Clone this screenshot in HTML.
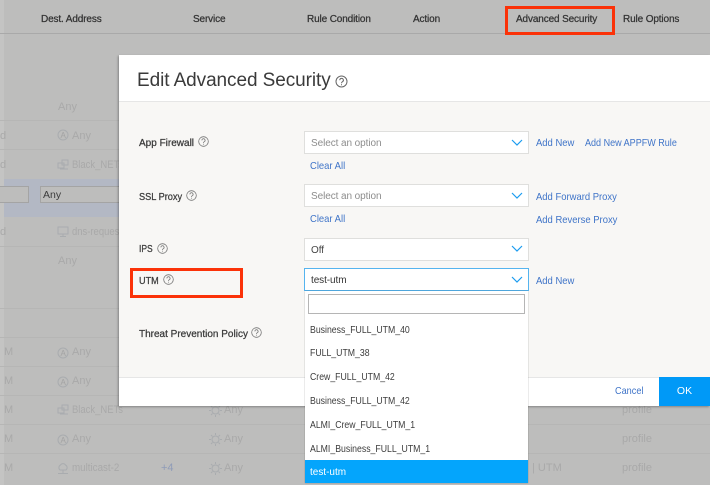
<!DOCTYPE html>
<html>
<head>
<meta charset="utf-8">
<style>
html,body{margin:0;padding:0;width:710px;height:485px;overflow:hidden;background:#bdbdbc;}
#w{position:absolute;left:0;top:0;width:710px;height:485px;overflow:hidden;font-family:"Liberation Sans",sans-serif;filter:blur(.3px);}
.t{position:absolute;white-space:nowrap;font-size:10px;line-height:14px;transform-origin:left center;}
.h{color:#333;-webkit-text-stroke:.25px #333;top:12.500px;letter-spacing:-.13px;}
.g{color:#a9a9a9;font-size:11px;}
.n{transform:scaleX(.86);}
.gl{position:absolute;left:0;width:710px;height:1px;background:#b6b6b5;}
.b{position:absolute;box-sizing:border-box;}
.l{color:#3a3a3a;-webkit-text-stroke:.25px #3a3a3a;left:139px;}
.a{color:#3f74c8;font-size:10.500px;transform:scaleX(.9);}
.s{position:absolute;left:304px;width:225px;height:23px;box-sizing:border-box;background:#fff;border:1px solid #dfdfdd;font-size:10px;line-height:23px;padding-left:6px;color:#8d8d8d;letter-spacing:-.08px;}
.o{color:#3c3c3c;font-size:10.500px;left:310px;transform:scaleX(.83);}
svg{position:absolute;overflow:visible;}
</style>
</head>
<body>
<div id="w">
<div class="b" style="left:0;top:0;width:4px;height:485px;background:#c4c4c3"></div>

<div class="t h" style="left:41px">Dest. Address</div>
<div class="t h" style="left:193px">Service</div>
<div class="t h" style="left:307px">Rule Condition</div>
<div class="t h" style="left:413px">Action</div>
<div class="t h" style="left:516px">Advanced Security</div>
<div class="t h" style="left:623px">Rule Options</div>
<div class="gl" style="top:33px;background:#a9a9a9"></div>

<div class="gl" style="top:120px"></div>
<div class="gl" style="top:149px"></div>
<div class="b" style="left:4px;top:179px;width:115px;height:38px;background:#b3b8c4"></div>
<div class="b" style="left:0;top:186px;width:29px;height:17px;background:#bdbdbc;border:1px solid #a4a4a4;border-left:0"></div>
<div class="b" style="left:40px;top:186px;width:79px;height:17px;background:#bdbdbc;border:1px solid #a4a4a4;border-right:0"></div>
<div class="t" style="left:43px;top:188px;font-size:10.500px;color:#3c3c3c">Any</div>
<div class="gl" style="top:246px;width:119px"></div>
<div class="gl" style="top:308px;width:119px"></div>
<div class="gl" style="top:337px;width:119px"></div>
<div class="gl" style="top:366px;width:119px"></div>
<div class="gl" style="top:395px;width:119px"></div>
<div class="gl" style="top:424px"></div>
<div class="gl" style="top:453px"></div>

<div class="t g" style="left:58px;top:100px">Any</div>
<div class="t g" style="left:0;top:129px">d</div>
<svg style="left:57px;top:129px" width="12" height="12"><circle cx="6" cy="6" r="5" fill="none" stroke="#a9acaf"/><text x="3.500" y="9" font-size="8" fill="#a3a3a3" font-family="Liberation Sans">A</text></svg>
<div class="t g" style="left:72px;top:129px">Any</div>
<div class="t g" style="left:0;top:158px">d</div>
<svg style="left:57px;top:159px" width="12" height="11" fill="none" stroke="#a9acaf"><rect x="5" y="1" width="6" height="5"/><rect x="1" y="4" width="6" height="5"/><path d="M3 10h8"/></svg>
<div class="t g n" style="left:72px;top:158px">Black_NETs</div>
<div class="t g" style="left:0;top:225px">d</div>
<svg style="left:57px;top:226px" width="12" height="11" fill="none" stroke="#a9acaf"><rect x="1" y="1" width="10" height="7"/><path d="M6 8v2M3 10.500h6"/></svg>
<div class="t g n" style="left:72px;top:225px">dns-request</div>
<div class="t g" style="left:58px;top:254px">Any</div>

<div class="t g" style="left:4px;top:345px">M</div>
<svg style="left:57px;top:347px" width="12" height="12"><circle cx="6" cy="6" r="5" fill="none" stroke="#a9acaf"/><text x="3.500" y="9" font-size="8" fill="#a3a3a3" font-family="Liberation Sans">A</text></svg>
<div class="t g" style="left:72px;top:345px">Any</div>
<div class="t g" style="left:4px;top:374px">M</div>
<svg style="left:57px;top:376px" width="12" height="12"><circle cx="6" cy="6" r="5" fill="none" stroke="#a9acaf"/><text x="3.500" y="9" font-size="8" fill="#a3a3a3" font-family="Liberation Sans">A</text></svg>
<div class="t g" style="left:72px;top:374px">Any</div>
<div class="t g" style="left:4px;top:403px">M</div>
<svg style="left:57px;top:404px" width="12" height="11" fill="none" stroke="#a9acaf"><rect x="5" y="1" width="6" height="5"/><rect x="1" y="4" width="6" height="5"/><path d="M3 10h8"/></svg>
<div class="t g n" style="left:72px;top:403px">Black_NETs</div>
<div class="t g" style="left:4px;top:432px">M</div>
<svg style="left:57px;top:434px" width="12" height="12"><circle cx="6" cy="6" r="5" fill="none" stroke="#a9acaf"/><text x="3.500" y="9" font-size="8" fill="#a3a3a3" font-family="Liberation Sans">A</text></svg>
<div class="t g" style="left:72px;top:432px">Any</div>
<div class="t g" style="left:4px;top:461px">M</div>
<svg style="left:57px;top:462px" width="12" height="13" fill="none" stroke="#a9acaf"><path d="M3 8a3 3 0 0 1 .5-5 3 3 0 0 1 5 0 3 3 0 0 1 .5 5zM6 8v3M1 11.500h10"/></svg>
<div class="t g" style="left:72px;top:461px;transform:scaleX(.89)">multicast-2</div>
<div class="t" style="left:161px;top:461px;font-size:11px;color:#8f9cb8">+4</div>

<svg style="left:209px;top:404px" width="13" height="13" fill="none" stroke="#a9acaf"><circle cx="6.500" cy="6.500" r="3.500"/><path d="M6.500 0v2M6.500 11v2M0 6.500h2M11 6.500h2M2 2l1.500 1.500M9.500 9.500L11 11M2 11l1.500-1.500M9.500 3.500L11 2"/></svg>
<div class="t g" style="left:224px;top:403px">Any</div>
<svg style="left:209px;top:433px" width="13" height="13" fill="none" stroke="#a9acaf"><circle cx="6.500" cy="6.500" r="3.500"/><path d="M6.500 0v2M6.500 11v2M0 6.500h2M11 6.500h2M2 2l1.500 1.500M9.500 9.500L11 11M2 11l1.500-1.500M9.500 3.500L11 2"/></svg>
<div class="t g" style="left:224px;top:432px">Any</div>
<svg style="left:209px;top:462px" width="13" height="13" fill="none" stroke="#a9acaf"><circle cx="6.500" cy="6.500" r="3.500"/><path d="M6.500 0v2M6.500 11v2M0 6.500h2M11 6.500h2M2 2l1.500 1.500M9.500 9.500L11 11M2 11l1.500-1.500M9.500 3.500L11 2"/></svg>
<div class="t g" style="left:224px;top:461px">Any</div>

<div class="t g" style="left:622px;top:403px">profile</div>
<div class="t g" style="left:622px;top:432px">profile</div>
<div class="t g" style="left:622px;top:461px">profile</div>
<div class="t g" style="left:532px;top:461px">| UTM</div>

<!-- modal -->
<div class="b" style="left:119px;top:55px;width:591px;height:351px;background:#fff;box-shadow:-1px 1px 2px rgba(0,0,0,.3)"></div>
<div class="b" style="left:119px;top:101px;width:591px;height:277px;background:#f8f7f5;border-top:1px solid #e6e6e6;border-bottom:1px solid #e6e6e6"></div>
<div class="t" style="left:137px;top:68px;font-size:19px;line-height:26px;color:#3a3a3a;letter-spacing:-.08px">Edit Advanced Security</div>
<svg style="left:335px;top:75px" width="13" height="13" fill="none" stroke="#666"><circle cx="6.500" cy="6.500" r="5.500"/><path d="M4.800 5.200a1.800 1.800 0 1 1 2.700 1.500c-.7.400-1 .8-1 1.500M6.500 9.300v1"/></svg>

<div class="t l" style="top:136.500px">App Firewall</div>
<svg style="left:198px;top:136px" width="11" height="11" fill="none" stroke="#777" stroke-width=".8"><circle cx="5.500" cy="5.500" r="4.800"/><path d="M3.900 4.400a1.600 1.600 0 1 1 2.400 1.300c-.6.300-.8.700-.8 1.300M5.500 7.700v.9"/></svg>
<div class="t l" style="top:190.500px;transform:scaleX(.92)">SSL Proxy</div>
<svg style="left:186px;top:190px" width="11" height="11" fill="none" stroke="#777" stroke-width=".8"><circle cx="5.500" cy="5.500" r="4.800"/><path d="M3.900 4.400a1.600 1.600 0 1 1 2.400 1.300c-.6.300-.8.700-.8 1.300M5.500 7.700v.9"/></svg>
<div class="t l" style="top:243px;transform:scaleX(.85)">IPS</div>
<svg style="left:157px;top:243px" width="11" height="11" fill="none" stroke="#777" stroke-width=".8"><circle cx="5.500" cy="5.500" r="4.800"/><path d="M3.900 4.400a1.600 1.600 0 1 1 2.400 1.300c-.6.300-.8.700-.8 1.300M5.500 7.700v.9"/></svg>
<div class="t l" style="top:275px;transform:scaleX(.91)">UTM</div>
<svg style="left:163px;top:274px" width="11" height="11" fill="none" stroke="#777" stroke-width=".8"><circle cx="5.500" cy="5.500" r="4.800"/><path d="M3.900 4.400a1.600 1.600 0 1 1 2.400 1.300c-.6.300-.8.700-.8 1.300M5.500 7.700v.9"/></svg>
<div class="t l" style="top:328px">Threat Prevention Policy</div>
<svg style="left:251px;top:327px" width="11" height="11" fill="none" stroke="#777" stroke-width=".8"><circle cx="5.500" cy="5.500" r="4.800"/><path d="M3.900 4.400a1.600 1.600 0 1 1 2.400 1.300c-.6.300-.8.700-.8 1.300M5.500 7.700v.9"/></svg>

<div class="s" style="top:131px">Select an option</div>
<div class="s" style="top:184px">Select an option</div>
<div class="s" style="top:238px;color:#444">Off</div>
<div class="s" style="top:268px;color:#333;border-color:#55b4ef">test-utm</div>
<svg style="left:511px;top:139px" width="12" height="7" fill="none" stroke="#1b9cf0" stroke-width="1.200"><path d="M1 1l5 5 5-5"/></svg>
<svg style="left:511px;top:192px" width="12" height="7" fill="none" stroke="#1b9cf0" stroke-width="1.200"><path d="M1 1l5 5 5-5"/></svg>
<svg style="left:511px;top:245px" width="12" height="7" fill="none" stroke="#1b9cf0" stroke-width="1.200"><path d="M1 1l5 5 5-5"/></svg>
<svg style="left:511px;top:276px" width="12" height="7" fill="none" stroke="#1b9cf0" stroke-width="1.200"><path d="M1 1l5 5 5-5"/></svg>

<div class="t a" style="left:310px;top:158.500px">Clear All</div>
<div class="t a" style="left:310px;top:212px">Clear All</div>
<div class="t a" style="left:536px;top:136px">Add New</div>
<div class="t a" style="left:585px;top:136px;transform:scaleX(.86)">Add New APPFW Rule</div>
<div class="t a" style="left:536px;top:190px">Add Forward Proxy</div>
<div class="t a" style="left:536px;top:213px">Add Reverse Proxy</div>
<div class="t a" style="left:536px;top:274px">Add New</div>

<!-- footer -->
<div class="t" style="left:615px;top:384px;font-size:10.500px;color:#3f74c8;transform:scaleX(.87)">Cancel</div>
<div class="b" style="left:659px;top:377px;width:51px;height:29px;background:#0099f7;color:#fff;font-size:10.500px;line-height:29px;text-align:center">OK</div>

<!-- dropdown -->
<div class="b" style="left:305px;top:291px;width:223px;height:192px;background:#fff;box-shadow:0 0 1px rgba(0,0,0,.4)"></div>
<div class="b" style="left:308px;top:294px;width:217px;height:20px;background:#fff;border:1px solid #b5b5b5"></div>
<div class="t o" style="top:322.500px">Business_FULL_UTM_40</div>
<div class="t o" style="top:345.500px">FULL_UTM_38</div>
<div class="t o" style="top:369.500px">Crew_FULL_UTM_42</div>
<div class="t o" style="top:393.500px">Business_FULL_UTM_42</div>
<div class="t o" style="top:417.500px">ALMI_Crew_FULL_UTM_1</div>
<div class="t o" style="top:441.500px">ALMI_Business_FULL_UTM_1</div>
<div class="b" style="left:305px;top:460px;width:223px;height:23px;background:#04a5fc"></div>
<div class="t o" style="top:465px;color:#fff;transform:scaleX(.95)">test-utm</div>

<!-- red annotations -->
<div class="b" style="left:505px;top:6px;width:110px;height:29px;border:3px solid #fb3208"></div>
<div class="b" style="left:130px;top:268px;width:113px;height:30px;border:3px solid #fb3208"></div>
</div>
</body>
</html>
